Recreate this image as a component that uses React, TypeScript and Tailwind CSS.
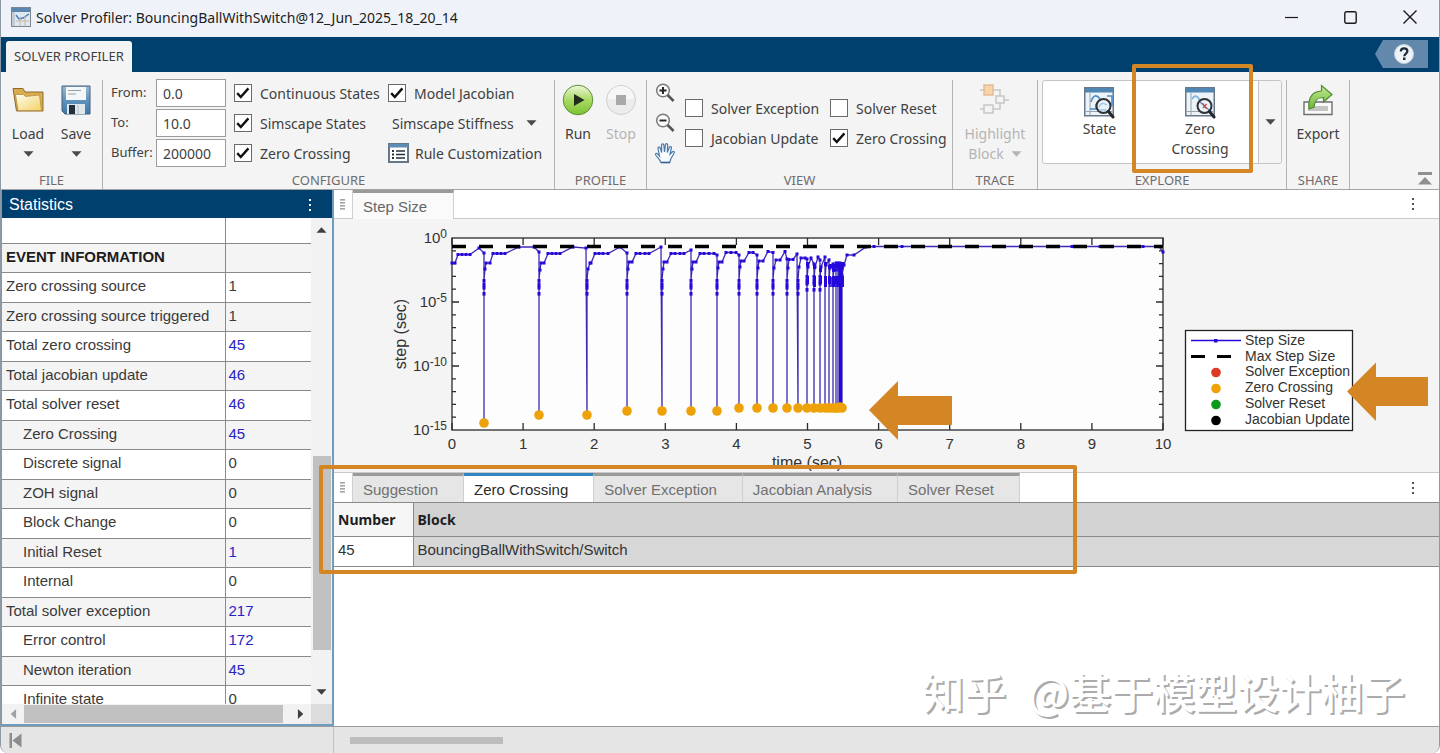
import React from "react";

type Point = [number, number];

/* ---------- small shared pieces ---------- */

function Caret({ className = "" }: { className?: string }) {
  return (
    <svg width="11" height="6" viewBox="0 0 11 6" className={className} aria-hidden="true">
      <path d="M0.5 0.3h10L5.5 5.8z" fill="currentColor" />
    </svg>
  );
}

function Dots({ className = "" }: { className?: string }) {
  return (
    <svg width="4" height="14" viewBox="0 0 4 14" className={className} aria-hidden="true">
      <rect x="1" y="1" width="2" height="2" fill="currentColor" />
      <rect x="1" y="6" width="2" height="2" fill="currentColor" />
      <rect x="1" y="11" width="2" height="2" fill="currentColor" />
    </svg>
  );
}

function Grip() {
  return (
    <div className="flex w-[19px] shrink-0 items-center justify-center border-r border-[#d0d0d0] bg-white">
      <svg width="6" height="11" viewBox="0 0 6 11" aria-hidden="true">
        {[0, 3, 6, 9].map((y) => (
          <rect key={y} x="0" y={y} width="5" height="1.6" fill="#a4a4a4" />
        ))}
      </svg>
    </div>
  );
}

function Check({ label, checked = false }: { label: string; checked?: boolean }) {
  return (
    <label className="flex h-[30px] items-center gap-2 whitespace-nowrap">
      <span className="grid">
        <input
          type="checkbox"
          defaultChecked={checked}
          className="peer col-start-1 row-start-1 size-[18px] appearance-none border border-[#6a6a6a] bg-white"
        />
        <svg
          viewBox="0 0 18 18"
          className="pointer-events-none col-start-1 row-start-1 hidden size-[18px] peer-checked:block"
          aria-hidden="true"
        >
          <path d="M3.2 9.2l3.6 3.8 7.6-8.6" fill="none" stroke="#111" strokeWidth="2.4" />
        </svg>
      </span>
      {label}
    </label>
  );
}

function Section({ title, className, children }: { title: string; className: string; children: React.ReactNode }) {
  return (
    <>
      <section className={`flex shrink-0 flex-col pt-[6px] ${className}`}>
        <div className="flex flex-1">{children}</div>
        <h2 className="h-[17px] text-center text-[13px] leading-[16px] text-[#6c6c6c]">{title}</h2>
      </section>
      <div className="mt-2 w-px shrink-0 bg-[#b4b4b4]" />
    </>
  );
}

/* ---------- icons ---------- */

function AppIcon() {
  return (
    <svg width="20" height="20" viewBox="0 0 20 20" aria-hidden="true">
      <rect x="0.5" y="0.5" width="19" height="19" fill="#dfe7ef" stroke="#7b8793" />
      <rect x="1" y="1" width="18" height="4" fill="#5b86b0" />
      <rect x="1" y="5" width="3" height="14" fill="#c4ccd4" />
      <path d="M5 8l3 4 4-1 6-4" fill="none" stroke="#3f7ec0" strokeWidth="1.4" />
      <path d="M5 14h13M9 10v9M14 9v10" stroke="#c9b9a2" strokeWidth="1" />
    </svg>
  );
}

function FolderIcon() {
  return (
    <svg width="32" height="28" viewBox="0 0 32 28" aria-hidden="true">
      <defs>
        <linearGradient id="fold" x1="0" y1="0" x2="1" y2="1">
          <stop offset="0" stopColor="#fffdf0" />
          <stop offset="1" stopColor="#f3d264" />
        </linearGradient>
      </defs>
      <path d="M1 2.500h10l2 3.500h18v19H4.500z" fill="#d9ad4e" stroke="#8d6a2d" />
      <path d="M3.500 8.500h8l2 2 14-1.500 2 15.500H6z" fill="url(#fold)" stroke="#b58f3f" strokeWidth="0.8" />
    </svg>
  );
}

function SaveIcon() {
  return (
    <svg width="30" height="30" viewBox="0 0 30 30" aria-hidden="true">
      <defs>
        <linearGradient id="disk" x1="0" y1="0" x2="0" y2="1">
          <stop offset="0" stopColor="#9fb9cf" />
          <stop offset="0.500" stopColor="#5f93bd" />
          <stop offset="1" stopColor="#3f78a8" />
        </linearGradient>
      </defs>
      <path d="M1 1h28v28H4l-3-3z" fill="url(#disk)" stroke="#3d5f80" />
      <rect x="5" y="2" width="20" height="13" fill="#f4f7f9" />
      <path d="M7 5.500h13M7 9h8" stroke="#9a9f9f" strokeWidth="1.200" />
      <rect x="6" y="19" width="18" height="10" fill="#dfe6ec" />
      <rect x="8" y="20" width="6" height="9" fill="#22303c" />
      <path d="M17 20v9" stroke="#b3bdc6" />
    </svg>
  );
}

function RuleIcon() {
  return (
    <svg width="21" height="20" viewBox="0 0 21 20" aria-hidden="true">
      <rect x="1" y="1" width="19" height="18" fill="#fff" stroke="#667787" strokeWidth="2" />
      <rect x="1" y="1" width="19" height="3.500" fill="#5f8cb5" />
      <path d="M4 8h2M4 11.500h2M4 15h2" stroke="#24313d" strokeWidth="2" />
      <path d="M8 8h9M8 11.500h9M8 15h9" stroke="#24313d" strokeWidth="1.400" />
    </svg>
  );
}

function RunIcon() {
  return (
    <svg width="32" height="32" viewBox="0 0 32 32" aria-hidden="true">
      <defs>
        <linearGradient id="run" x1="0" y1="0" x2="0" y2="1">
          <stop offset="0" stopColor="#eef7dc" />
          <stop offset="0.500" stopColor="#a9da62" />
          <stop offset="1" stopColor="#7cc234" />
        </linearGradient>
      </defs>
      <circle cx="16" cy="16" r="14.800" fill="url(#run)" stroke="#5f8f38" />
      <path d="M12 10l10.500 6L12 22z" fill="#222c1c" />
    </svg>
  );
}

function StopIcon() {
  return (
    <svg width="32" height="32" viewBox="0 0 32 32" aria-hidden="true">
      <circle cx="16" cy="16" r="14.500" fill="#ececec" stroke="#cfcfcf" />
      <path d="M3 15a13 13 0 0 1 26 0z" fill="#f7f7f7" />
      <rect x="11" y="11" width="10" height="10" fill="#a9a9a9" />
    </svg>
  );
}

function ZoomIcon({ plus }: { plus: boolean }) {
  return (
    <svg width="20" height="20" viewBox="0 0 20 20" aria-hidden="true">
      <circle cx="8" cy="7.500" r="6.300" fill="#fafafa" stroke="#7a7a7a" strokeWidth="1.500" />
      <path d="M12.600 12l6 6" stroke="#555" strokeWidth="2.600" />
      <path d={plus ? "M4.500 7.500h7M8 4v7" : "M4.500 7.500h7"} stroke="#222" strokeWidth="1.900" />
    </svg>
  );
}

function HandIcon() {
  return (
    <svg width="22" height="22" viewBox="0 0 22 22" aria-hidden="true">
      <path
        d="M7 20.500c-1-2.500-3-4.500-5.300-7.500-.8-1.300.7-2.200 1.800-1.200L5.500 14 4 6.500C3.800 5 5.700 4.500 6.200 6l1.500 4.500L7.500 3C7.500 1.500 9.600 1.400 9.800 2.900l.7 7 1-7.200c.3-1.500 2.300-1.200 2.200.3l-.4 7.500 2.100-5.200c.6-1.300 2.300-.7 2 .7L16 12.200l2.500-2.400c1.200-.9 2.400.2 1.600 1.400L17 16.500c-.6 1.600-.8 2.600-1.200 4z"
        fill="#f7fbff"
        stroke="#4d7ba8"
        strokeWidth="1.200"
      />
      <path d="M7 20.500h9" stroke="#2f5f8f" strokeWidth="1.600" />
    </svg>
  );
}

function TraceIcon() {
  return (
    <svg width="30" height="32" viewBox="0 0 30 32" aria-hidden="true">
      <g fill="none" stroke="#c6c6c6" strokeWidth="1.500">
        <path d="M0 6h4M13 6h7v7M24 16h5M20 19v6h-7M0 25h4" />
        <rect x="16" y="12" width="8" height="7" fill="#f4f4f4" />
        <rect x="4" y="21" width="9" height="8" fill="#f4f4f4" />
      </g>
      <rect x="4" y="1" width="9" height="10" fill="#fbd3a8" stroke="#e2bd97" strokeWidth="1.500" />
    </svg>
  );
}

function ExploreIcon({ cross }: { cross: boolean }) {
  return (
    <svg width="31" height="32" viewBox="0 0 31 32" aria-hidden="true">
      <rect x="0.750" y="0.750" width="28.500" height="28" fill="#eef3f8" stroke="#66788a" strokeWidth="1.500" />
      <rect x="1" y="1" width="28" height="4.500" fill="#4f86b3" />
      <path d="M6 6v22M1.500 24.500h27" stroke="#94a3b0" strokeWidth="1" />
      {cross ? (
        <path d="M7 12c3-5 6-3 8 2s3 8 8 6" fill="none" stroke="#7bb2e0" strokeWidth="1.600" />
      ) : (
        <path d="M7 15c2-7 6-8 9-3M6 22h6v-5M23 9h5v10" fill="none" stroke="#4b8ccc" strokeWidth="1.600" />
      )}
      <circle cx="19.500" cy="19" r="7" fill="#e9f1f8" fillOpacity="0.900" stroke="#2e3338" strokeWidth="2" />
      {cross ? (
        <>
          <path d="M15 15l9 8" stroke="#4b8ccc" strokeWidth="1.200" />
          <path d="M17.500 16l4 6M21.500 17l-3.500 4" stroke="#d8432f" strokeWidth="1.300" />
        </>
      ) : (
        <path d="M15 20c2-5 5-4 8-2M15 23h8" fill="none" stroke="#9fc6e6" strokeWidth="1.300" />
      )}
      <path d="M24.500 24.500l4.500 5.500" stroke="#25282b" strokeWidth="3" strokeLinecap="round" />
    </svg>
  );
}

function ExportIcon() {
  return (
    <svg width="30" height="32" viewBox="0 0 30 32" aria-hidden="true">
      <defs>
        <linearGradient id="exp" x1="0" y1="0" x2="0" y2="1">
          <stop offset="0" stopColor="#c3ec95" />
          <stop offset="1" stopColor="#6fb53b" />
        </linearGradient>
      </defs>
      <path d="M1 18h28v12.500H1z" fill="#fafafa" stroke="#6e6e6e" strokeWidth="1.400" />
      <rect x="5" y="22" width="20" height="5" fill="#c4c4c4" />
      <path
        d="M6 25C5 15 8 7.500 18.500 7V1.500L29 10.500 20.500 18v-4.500C13.500 13.500 11.500 17 11 23z"
        fill="url(#exp)"
        stroke="#4d8a2b"
        strokeWidth="1.200"
      />
    </svg>
  );
}

/* ---------- chart ---------- */

const EVENTS: Point[] = [
  [484, 423], [539, 415], [587, 415], [627, 411], [662, 411], [691, 411], [717, 411], [739, 408],
  [757, 408], [773, 408], [787, 408], [798, 408], [807, 408], [814, 408], [820, 408], [825, 408],
  [829, 408], [833, 408], [836, 408], [838, 408], [840, 407], [842, 408],
];

const SEGMENTS: Point[][] = [
  [[452, 263], [455, 263], [458, 254.500], [462, 254.500], [466, 254.500], [470, 254.500], [479, 248], [484, 253]],
  [[485, 269], [486, 263], [490, 263], [493, 253.500], [497, 253.500], [501, 253.500], [505, 253.500], [519, 247], [534, 247], [539, 252]],
  [[540, 270], [541, 263], [544, 263], [548, 253.500], [552, 253.500], [556, 253.500], [560, 253.500], [573, 247], [586, 248]],
  [[588, 269], [590, 263], [591, 263], [595, 253.500], [599, 253.500], [603, 253.500], [608, 253.500], [620, 247], [627, 253]],
  [[628, 269], [629, 262], [632, 262], [636, 253.500], [640, 253.500], [645, 253.500], [649, 253.500], [661, 247]],
  [[663, 269], [664, 262], [667, 262], [671, 253.500], [675, 253.500], [680, 253.500], [684, 253.500], [691, 250]],
  [[692, 269], [693, 262], [696, 262], [700, 253.500], [704, 253.500], [709, 253.500], [714, 253.500], [717, 255]],
  [[718, 268], [719, 262], [722, 262], [726, 252.500], [731, 252.500], [736, 252.500], [739, 255]],
  [[740, 267], [741, 261], [744, 261], [749, 252.500], [753, 252.500], [757, 255]],
  [[758, 268], [759, 261], [763, 261], [768, 251.500], [773, 252.500]],
  [[774, 268], [776, 260], [780, 260], [785, 251.500], [787, 259]],
  [[788, 268], [789, 259.500], [793, 259.500], [797, 254]],
  [[799, 267], [801, 258], [805, 258], [807, 259]],
  [[808, 267], [811, 258], [814, 264]],
  [[815, 267], [818, 257], [820, 260]],
  [[821, 267], [825, 257]],
  [[826, 265], [829, 260]],
  [[830, 268], [833, 264]],
  [[834, 268], [836, 263]],
  [[836, 270], [838, 263]],
  [[839, 270], [840, 263]],
  [[841, 272], [842, 268]],
  [[842, 275], [844, 265], [847, 255], [854, 255], [866, 247]],
];

const CLUSTER = [279, 283, 286, 292];
const TAIL = [874, 902, 922, 948, 975, 1002, 1029, 1072, 1100, 1143];
const DECADES = Array.from({ length: 14 }, (_, i) => i + 1);
const SECONDS = Array.from({ length: 11 }, (_, i) => i);

const LEGEND = [
  { label: "Step Size", y: 341 },
  { label: "Max Step Size", y: 357 },
  { label: "Solver Exception", y: 372, color: "#dd3a26" },
  { label: "Zero Crossing", y: 388, color: "#eea208" },
  { label: "Solver Reset", y: 404, color: "#0c9b18" },
  { label: "Jacobian Update", y: 420, color: "#000" },
];

function StepChart() {
  const points: Point[] = [];
  SEGMENTS.forEach((segment, i) => {
    points.push(...segment);
    if (EVENTS[i]) points.push(EVENTS[i], [EVENTS[i][0], 280]);
  });
  TAIL.forEach((x) => points.push([x, 246.5]));
  points.push([1159, 246.5], [1163, 252]);
  const line = points.map((p) => p.join(",")).join(" ");
  const marks = SEGMENTS.flat().concat(TAIL.map((x): Point => [x, 246.5]), [[1163, 252]]);

  return (
    <svg
      viewBox="334 219 1105 253"
      preserveAspectRatio="xMinYMin meet"
      className="block h-full w-full font-[Liberation_Sans,Arial,sans-serif]"
      role="img"
      aria-label="Solver step size over time"
    >
      <rect x="452" y="238" width="711" height="192" fill="#fdfdfd" />
      <g stroke="#2b2b2b" strokeWidth="1.300" fill="none">
        {SECONDS.map((s) => (
          <path key={s} d={`M${452 + s * 71.1} 238v7M${452 + s * 71.1} 430v-7`} />
        ))}
        {DECADES.map((d) => (
          <path
            key={d}
            d={`M452 ${238 + d * 12.8}h${d % 5 ? 4 : 7}M1163 ${238 + d * 12.8}h${d % 5 ? -4 : -7}`}
          />
        ))}
        <rect x="452" y="238" width="711" height="192" />
      </g>

      <polyline points={line} fill="none" stroke="#3a2bb4" strokeWidth="1.300" />
      <g fill="#2408dc">
        {marks.map(([x, y], i) => (
          <rect key={i} x={x - 1.5} y={y - 1.5} width="3" height="3" />
        ))}
        {EVENTS.slice(0, 15).map(([x], i) =>
          CLUSTER.map((y) => <rect key={`${i}-${y}`} x={x - 1.5} y={y - (i > 11 ? 4 : 0)} width="3" height="3.600" />)
        )}
        {EVENTS.slice(12).map(([x], i) => (
          <path key={i} d={`M${x - 1} ${262 + (i % 3) * 3}h3v4h-3zM${x - 1} 276h3v${8 + (i % 2) * 3}h-3z`} />
        ))}
        <rect x="829" y="264" width="14" height="4" />
        <rect x="829" y="277" width="12" height="10" fillOpacity="0.800" />
        <rect x="839" y="268" width="3" height="136" />
      </g>
      <path d="M452 246.500H1163" stroke="#000" strokeWidth="3.600" strokeDasharray="14 13" />
      <g fill="#eea208">
        {EVENTS.map(([x, y]) => (
          <circle key={x} cx={x} cy={y} r="4.800" />
        ))}
      </g>

      <g fill="#333" fontSize="15">
        {SECONDS.map((s) => (
          <text key={s} x={452 + s * 71.1} y="449" textAnchor="middle">
            {s}
          </text>
        ))}
        {["0", "-5", "-10", "-15"].map((e, i) => (
          <text key={e} x="447" y={243 + i * 64} textAnchor="end">
            10
            <tspan dy="-5" fontSize="12">
              {e}
            </tspan>
          </text>
        ))}
        <text x="807" y="468" textAnchor="middle" fontSize="16">
          time (sec)
        </text>
        <text transform="translate(406 334) rotate(-90)" textAnchor="middle" fontSize="16">
          step (sec)
        </text>
      </g>

      <rect x="1185.500" y="330.500" width="167" height="100" fill="#fff" stroke="#222" strokeWidth="1.300" />
      <path d="M1191 340.500h50" stroke="#2408dc" strokeWidth="1.300" />
      <rect x="1214" y="339" width="3.500" height="3.500" fill="#2408dc" />
      <path d="M1191 356.500h14M1217 356.500h14" stroke="#000" strokeWidth="3" />
      {LEGEND.map(({ label, y, color }) => (
        <g key={label}>
          {color && <circle cx="1216" cy={y + 0.5} r="4.800" fill={color} />}
          <text x="1245" y={y + 4} fontSize="14" fill="#333">
            {label}
          </text>
        </g>
      ))}

      <g fill="#d58624">
        <path d="M869 410l29-29v15h54v29h-54v15z" />
        <path d="M1347 391.500l29-29v14.500h52v29h-52v15z" />
      </g>
    </svg>
  );
}

/* ---------- statistics ---------- */

interface Stat {
  name: string;
  value: string;
  link?: boolean;
  child?: boolean;
  bold?: boolean;
}

const STATS: Stat[] = [
  { name: "EVENT INFORMATION", value: "", bold: true },
  { name: "Zero crossing source", value: "1" },
  { name: "Zero crossing source triggered", value: "1" },
  { name: "Total zero crossing", value: "45", link: true },
  { name: "Total jacobian update", value: "46", link: true },
  { name: "Total solver reset", value: "46", link: true },
  { name: "Zero Crossing", value: "45", link: true, child: true },
  { name: "Discrete signal", value: "0", child: true },
  { name: "ZOH signal", value: "0", child: true },
  { name: "Block Change", value: "0", child: true },
  { name: "Initial Reset", value: "1", link: true, child: true },
  { name: "Internal", value: "0", child: true },
  { name: "Total solver exception", value: "217", link: true },
  { name: "Error control", value: "172", link: true, child: true },
  { name: "Newton iteration", value: "45", link: true, child: true },
  { name: "Infinite state", value: "0", child: true },
];

function StatisticsPanel() {
  return (
    <aside className="flex w-[333px] shrink-0 flex-col border-r-2 border-b-2 border-l border-[#6f9dc0] bg-white">
      <header className="flex h-[28px] shrink-0 items-center justify-between bg-[#00406f] pt-[2px] pr-[20px] pl-[7px] text-[16px] text-white">
        <h2>Statistics</h2>
        <button type="button" aria-label="Panel options">
          <Dots />
        </button>
      </header>
      <div className="flex min-h-0 flex-1">
        <div className="min-w-0 flex-1 overflow-hidden">
          <table className="w-full table-fixed border-collapse text-[15px] text-[#3a3a3a]">
            <colgroup>
              <col className="w-[223px]" />
              <col />
            </colgroup>
            <tbody>
              <tr className="h-[25px]">
                <td className="border-r border-b border-[#8a8a8a]" />
                <td className="border-b border-[#8a8a8a]" />
              </tr>
              {STATS.map((s) => (
                <tr key={s.name} className="odd:h-[30px] odd:bg-white even:h-[29px] even:bg-[#f4f4f4]">
                  <td
                    className={`border-r border-b border-[#8a8a8a] p-0 pb-[2px] leading-[20px] whitespace-nowrap ${
                      s.child ? "pl-[21px]" : "pl-[4px]"
                    } ${s.bold ? "font-bold text-[#1c1c1c]" : ""}`}
                  >
                    {s.name}
                  </td>
                  <td className="border-b border-[#8a8a8a] p-0 pb-[2px] pl-[3px] leading-[20px]">
                    {s.link ? (
                      <a href="#details" className="text-[#2a22c4]">
                        {s.value}
                      </a>
                    ) : (
                      s.value
                    )}
                  </td>
                </tr>
              ))}
            </tbody>
          </table>
        </div>
        <div className="flex w-[21px] shrink-0 flex-col bg-[#f2f2f2] text-[#3f3f3f]">
          <button type="button" aria-label="Scroll up" className="grid h-[24px] place-items-center">
            <Caret className="rotate-180" />
          </button>
          <div className="grow-[215] basis-0" />
          <div className="ml-[2px] w-[18px] grow-[195] basis-0 bg-[#c1c1c1]" />
          <div className="grow-[30] basis-0" />
          <button type="button" aria-label="Scroll down" className="grid h-[24px] place-items-center">
            <Caret />
          </button>
        </div>
      </div>
      <div className="flex h-[20px] shrink-0 bg-[#f2f2f2] text-[#3f3f3f]">
        <button type="button" aria-label="Scroll left" className="grid w-[22px] place-items-center text-[#a0a0a0]">
          <Caret className="rotate-90" />
        </button>
        <div className="my-px grow-[259] basis-0 bg-[#c1c1c1]" />
        <div className="grow-[6] basis-0" />
        <button type="button" aria-label="Scroll right" className="grid w-[22px] place-items-center">
          <Caret className="-rotate-90" />
        </button>
        <div className="w-[21px] bg-[#dcdcdc]" />
      </div>
    </aside>
  );
}

/* ---------- result tabs ---------- */

const TABS = ["Suggestion", "Zero Crossing", "Solver Exception", "Jacobian Analysis", "Solver Reset"];

function ResultPanel() {
  return (
    <section className="relative flex min-h-0 flex-1 flex-col border-t border-[#c9c9c9] bg-white">
      <div className="flex h-[30px] shrink-0 border-b border-[#8a8a8a]">
        <Grip />
        <div role="tablist" className="flex">
          {TABS.map((tab) => (
            <button
              key={tab}
              type="button"
              role="tab"
              aria-selected={tab === "Zero Crossing"}
              className={`border-t-[3px] border-r border-r-[#cfcfcf] pt-[2px] pr-[25px] pl-[10px] text-[15px] whitespace-nowrap ${
                tab === "Zero Crossing"
                  ? "border-t-[#2f84c4] bg-white text-[#2b2b2b]"
                  : "border-t-[#9a9a98] bg-[#e6e6e6] text-[#707070]"
              }`}
            >
              {tab}
            </button>
          ))}
        </div>
        <button type="button" aria-label="Tab options" className="mr-[24px] ml-auto text-[#555]">
          <Dots />
        </button>
      </div>
      <table className="w-full table-fixed border-collapse text-left text-[15px] text-[#333]">
        <colgroup>
          <col className="w-[79px]" />
          <col />
        </colgroup>
        <thead>
          <tr className="h-[33px] border-b border-[#8a8a8a] font-[Noto_Sans,Open_Sans,sans-serif] text-[14px] text-[#1f1f1f]">
            <th className="border-r border-[#8a8a8a] bg-[#f6f6f6] pl-[4px]">Number</th>
            <th className="bg-[#d2d2d2] pl-[4px]">Block</th>
          </tr>
        </thead>
        <tbody>
          <tr className="h-[30px] border-b border-[#8a8a8a]">
            <td className="border-r border-[#8a8a8a] pb-[2px] pl-[4px]">45</td>
            <td className="bg-[#d7d7d7] pb-[2px] pl-[4px]">BouncingBallWithSwitch/Switch</td>
          </tr>
        </tbody>
      </table>
      <div className="pointer-events-none absolute -top-[8px] -left-[15px] h-[109px] w-[758px] rounded-[2px] border-4 border-[#d58624]" />
      <p className="pointer-events-none absolute right-[34px] bottom-[7px] flex gap-[22px] font-[Noto_Sans_CJK_SC,sans-serif] text-[42px] leading-[56px] font-medium whitespace-nowrap text-white [text-shadow:2px_2px_0_#ababab]">
        <span>知乎</span>
        <span>@基于模型设计柚子</span>
      </p>
    </section>
  );
}

/* ---------- ribbon ---------- */

function BigButton({
  icon,
  label,
  caret = false,
  disabled = false,
  className,
}: {
  icon: React.ReactNode;
  label: string;
  caret?: boolean;
  disabled?: boolean;
  className: string;
}) {
  return (
    <button
      type="button"
      disabled={disabled}
      className={`flex flex-col items-center pt-[6px] leading-[20px] disabled:text-[#b4b4b4] ${className}`}
    >
      <span className="mb-[8px] grid h-[32px] place-items-center">{icon}</span>
      {label}
      {caret && <Caret className="mt-[7px] text-[#4a4a4a]" />}
    </button>
  );
}

const FIELDS = [
  { id: "from", label: "From:", value: "0.0" },
  { id: "to", label: "To:", value: "10.0" },
  { id: "buffer", label: "Buffer:", value: "200000" },
];

function Ribbon() {
  return (
    <div className="flex h-[118px] shrink-0 border-b border-[#a3a3a3] bg-[#f4f4f4] font-[Noto_Sans,Open_Sans,sans-serif] text-[14px] text-[#404040]">
      <Section title="FILE" className="w-[101px]">
        <BigButton icon={<FolderIcon />} label="Load" caret className="w-[54px]" />
        <BigButton icon={<SaveIcon />} label="Save" caret className="w-[42px]" />
      </Section>

      <Section title="CONFIGURE" className="w-[451px]">
        <div className="ml-[8px] flex w-[115px] flex-col">
          {FIELDS.map((f) => (
            <div key={f.id} className="flex h-[30px] items-center">
              <label htmlFor={f.id} className="w-[45px] text-[13px]">
                {f.label}
              </label>
              <input
                id={f.id}
                defaultValue={f.value}
                className="h-[28px] w-[70px] border border-[#9c9c9c] bg-white px-[6px]"
              />
            </div>
          ))}
        </div>
        <div className="ml-[8px] w-[154px]">
          <Check label="Continuous States" checked />
          <Check label="Simscape States" checked />
          <Check label="Zero Crossing" checked />
        </div>
        <div>
          <Check label="Model Jacobian" checked />
          <button type="button" className="flex h-[30px] items-center gap-[12px] pl-[4px] whitespace-nowrap">
            Simscape Stiffness <Caret className="text-[#4a4a4a]" />
          </button>
          <button type="button" className="flex h-[30px] items-center gap-[6px] whitespace-nowrap">
            <RuleIcon /> Rule Customization
          </button>
        </div>
      </Section>

      <Section title="PROFILE" className="w-[91px]">
        <BigButton icon={<RunIcon />} label="Run" className="w-[46px]" />
        <BigButton icon={<StopIcon />} label="Stop" disabled className="w-[40px]" />
      </Section>

      <Section title="VIEW" className="w-[305px]">
        <div className="flex w-[36px] flex-col items-center">
          <button type="button" aria-label="Zoom in" className="grid h-[30px] place-items-center">
            <ZoomIcon plus />
          </button>
          <button type="button" aria-label="Zoom out" className="grid h-[30px] place-items-center">
            <ZoomIcon plus={false} />
          </button>
          <button type="button" aria-label="Pan" className="grid h-[30px] place-items-center">
            <HandIcon />
          </button>
        </div>
        <div className="mt-[15px] ml-[2px] w-[145px]">
          <Check label="Solver Exception" />
          <Check label="Jacobian Update" />
        </div>
        <div className="mt-[15px]">
          <Check label="Solver Reset" />
          <Check label="Zero Crossing" checked />
        </div>
      </Section>

      <Section title="TRACE" className="w-[84px]">
        <button type="button" disabled className="flex w-full flex-col items-center pt-[6px] leading-[20px] text-[#b4b4b4]">
          <span className="mb-[8px]">
            <TraceIcon />
          </span>
          Highlight
          <span className="flex items-center gap-[7px]">
            Block <Caret />
          </span>
        </button>
      </Section>

      <Section title="EXPLORE" className="w-[248px]">
        <div className="mx-[4px] mt-[2px] flex h-[84px] flex-1 rounded-[3px] border border-[#c4c4c4] bg-white">
          <button type="button" className="flex flex-1 flex-col items-center pt-[6px] pl-[14px] leading-[20px]">
            <ExploreIcon cross={false} />
            State
          </button>
          <button type="button" className="relative flex w-[116px] flex-col items-center pt-[6px] leading-[20px]">
            <ExploreIcon cross />
            Zero
            <br />
            Crossing
            <span className="pointer-events-none absolute -top-[17px] right-[5px] h-[109px] w-[121px] rounded-[2px] border-4 border-[#d58624]" />
          </button>
          <button
            type="button"
            aria-label="More plots"
            className="grid w-[23px] place-items-center rounded-r-[3px] border-l border-[#c4c4c4] bg-[#f4f4f4]"
          >
            <Caret className="text-[#4a4a4a]" />
          </button>
        </div>
      </Section>

      <Section title="SHARE" className="w-[62px]">
        <BigButton icon={<ExportIcon />} label="Export" className="w-full" />
      </Section>

      <button type="button" aria-label="Collapse toolstrip" className="mt-auto mr-[7px] mb-[4px] ml-auto">
        <svg width="14" height="13" viewBox="0 0 14 13" aria-hidden="true">
          <path d="M0 0h14v3H0zM7 5l7 7.500H0z" fill="#8f8f8f" />
        </svg>
      </button>
    </div>
  );
}

/* ---------- window ---------- */

export default function App() {
  return (
    <div className="flex h-screen flex-col overflow-hidden rounded-b-[8px] border-r border-l border-[#8d99a5] bg-[#e5e5e5] font-[Liberation_Sans,Arial,sans-serif] text-[#333]">
      <div className="flex h-[37px] shrink-0 items-center bg-[#eff3f9] pb-[3px] pl-[10px] font-[Noto_Sans,Open_Sans,sans-serif]">
        <AppIcon />
        <h1 className="ml-[5px] text-[14px] text-[#1d1d1d]">Solver Profiler: BouncingBallWithSwitch@12_Jun_2025_18_20_14</h1>
        <div className="mr-[22px] ml-auto flex items-center gap-[46px]">
          <button type="button" aria-label="Minimize">
            <svg width="13" height="13" viewBox="0 0 13 13" aria-hidden="true">
              <path d="M0 6.500h13" stroke="#1a1a1a" strokeWidth="1.200" />
            </svg>
          </button>
          <button type="button" aria-label="Maximize">
            <svg width="13" height="13" viewBox="0 0 13 13" aria-hidden="true">
              <rect x="0.800" y="0.800" width="11.400" height="11.400" rx="1.500" fill="none" stroke="#1a1a1a" strokeWidth="1.400" />
            </svg>
          </button>
          <button type="button" aria-label="Close">
            <svg width="14" height="14" viewBox="0 0 14 14" aria-hidden="true">
              <path d="M0.500 0.500l13 13M13.500 0.500l-13 13" stroke="#1a1a1a" strokeWidth="1.400" />
            </svg>
          </button>
        </div>
      </div>

      <div className="flex h-[35px] shrink-0 items-end bg-[#00406f] pl-[5px]">
        <div role="tablist">
          <button
            type="button"
            role="tab"
            aria-selected="true"
            className="block h-[31px] rounded-t-[3px] bg-[#f4f4f4] px-[8px] font-[Noto_Sans,Open_Sans,sans-serif] text-[13px] text-[#404040]"
          >
            SOLVER PROFILER
          </button>
        </div>
        <button type="button" aria-label="Help" className="mr-[11px] mb-[4px] ml-auto">
          <svg width="53" height="28" viewBox="0 0 53 28" aria-hidden="true">
            <path d="M8 0h45v28H8L0 14z" fill="#6289ac" />
            <circle cx="29" cy="14" r="9.500" fill="#eef3f7" stroke="#c3d2df" />
            <path
              d="M25.800 11.600c0-2 1.400-3.200 3.300-3.200s3.300 1.100 3.300 2.900c0 2.100-3.100 2.500-3.100 4.900"
              fill="none"
              stroke="#1e2b38"
              strokeWidth="2.200"
            />
            <rect x="28" y="17.500" width="2.500" height="2.500" fill="#1e2b38" />
          </svg>
        </button>
      </div>

      <Ribbon />

      <div className="flex min-h-0 flex-1">
        <StatisticsPanel />
        <main className="flex min-w-0 flex-1 flex-col">
          <div className="flex h-[29px] shrink-0 border-b border-[#c9c9c9] bg-white">
            <Grip />
            <button
              type="button"
              className="-mb-px border-t-[3px] border-r border-t-[#9a9a98] border-r-[#cfcfcf] bg-[#fafafa] pt-[2px] pr-[26px] pl-[10px] text-[15px] whitespace-nowrap text-[#666]"
            >
              Step Size
            </button>
            <button type="button" aria-label="Plot options" className="mr-[24px] ml-auto text-[#555]">
              <Dots />
            </button>
          </div>
          <div className="h-[253px] shrink-0 overflow-hidden bg-[#f4f4f4]">
            <StepChart />
          </div>
          <ResultPanel />
        </main>
      </div>

      <footer className="flex h-[27px] shrink-0 border-t border-[#9a9a9a] bg-[#e5e5e5]">
        <div className="flex w-[333px] items-center border-r border-[#c2c2c2] pl-[8px]">
          <button type="button" aria-label="Collapse panel">
            <svg width="13" height="15" viewBox="0 0 13 15" aria-hidden="true">
              <path d="M0.500 0h2.500v15H0.500zM12.500 0.500v14L3.500 7.500z" fill="#8c8c8c" />
            </svg>
          </button>
        </div>
        <div className="ml-[16px] h-[7px] w-[153px] self-center bg-[#bdbdbd]" />
      </footer>
    </div>
  );
}
